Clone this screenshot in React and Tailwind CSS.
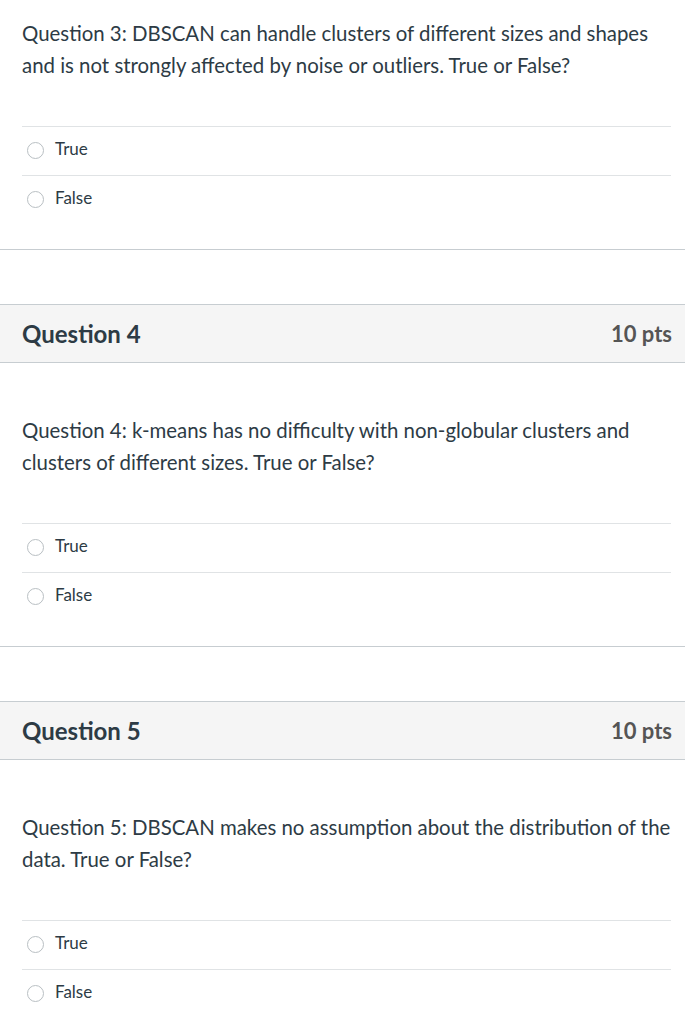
const questions = [
  {
    n: 4,
    text: 'Question 4: k-means has no difficulty with non-globular clusters and clusters of different sizes. True or False?',
  },
  {
    n: 5,
    text: 'Question 5: DBSCAN makes no assumption about the distribution of the data. True or False?',
  },
];

function Answers() {
  return (
    <div className="ml-[22px] mr-[14px] border-t border-[#e0e3e5]">
      {['True', 'False'].map((a, i) => (
        <label
          key={a}
          className={`flex items-center h-[49px] gap-[11px] pl-[5px] pb-[5px] ${i === 0 ? 'border-b border-[#e0e3e5]' : ''}`}
        >
          <span className="w-[17px] h-[17px] rounded-full border border-[#b9bfc3] bg-white shrink-0 mt-[3px]" />
          <span className="text-[17px] text-[#2d3b45]">{a}</span>
        </label>
      ))}
    </div>
  );
}

function QuestionBody({ text }) {
  return (
    <div className="border-b border-[#c7cdd1] pb-[24px]">
      <p className="pl-[22px] pr-[12px] text-[20.4px] leading-[32px] text-[#2d3b45] mb-[45px]">{text}</p>
      <Answers />
    </div>
  );
}

export default function App() {
  return (
    <div className="bg-white min-h-screen" style={{ fontFamily: 'Lato, "Open Sans", sans-serif' }}>
      <div className="pt-[17px]">
        <QuestionBody text="Question 3: DBSCAN can handle clusters of different sizes and shapes and is not strongly affected by noise or outliers. True or False?" />
      </div>
      {questions.map((q) => (
        <div key={q.n} className="pt-[54px]">
          <div className="flex items-center justify-between h-[59px] bg-[#f5f5f5] border-y border-[#c7cdd1] pl-[22px] pr-[13px]">
            <h2 className="text-[24px] font-bold text-[#2d3b45]">Question {q.n}</h2>
            <span className="text-[22px] font-bold text-[#555555]">10 pts</span>
          </div>
          <div className="pt-[51px]">
            <QuestionBody text={q.text} />
          </div>
        </div>
      ))}
    </div>
  );
}
